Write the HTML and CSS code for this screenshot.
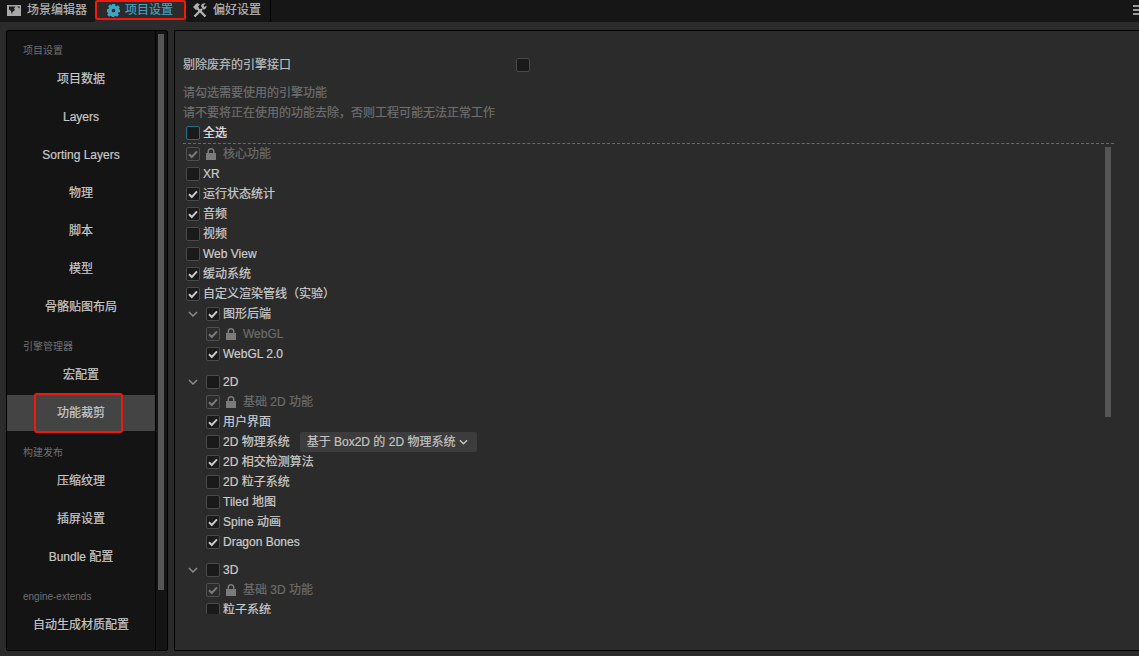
FILE: index.html
```html
<!DOCTYPE html>
<html lang="zh">
<head>
<meta charset="utf-8">
<title>项目设置</title>
<link rel="stylesheet" href="styles.css">
</head>
<body>
<svg class="defs" width="0" height="0" aria-hidden="true">
  <symbol id="lock" viewBox="0 0 10 12"><path fill-rule="evenodd" d="M0 5h1.500V3.500a3.500 3.500 0 0 1 7 0V5H10v7H0zM3 5h4V3.500a2 2 0 0 0-4 0z" fill="currentColor"/></symbol>
  <symbol id="chev" viewBox="0 0 10 6"><path d="M1 1l4 4 4-4" fill="none" stroke="currentColor" stroke-width="1.500"/></symbol>
  <symbol id="tick" viewBox="0 0 12 12"><path d="M2 6.200l2.800 2.800L10 3.400" fill="none" stroke="currentColor" stroke-width="2"/></symbol>
</svg>
<header class="tabbar">
  <div class="tab tab-scene">
    <svg class="tab-icon" viewBox="0 0 14 11"><path d="M0 0h14v11H0z" fill="#a8a8a8"/><path d="M2 1.500h6.500L7 3.500 8 5 5.500 7 5 9.500 4 6 2 4.500z M10 1.500h2.500v2z" fill="#1d1d1d"/></svg>
    <span>场景编辑器</span>
  </div>
  <div class="tab tab-active">
    <svg class="tab-icon gear" viewBox="0 0 14 14"><path fill-rule="evenodd" d="M5.400 0h3.200l.4 1.800 1.200.6 1.600-1 2 2.200-1 1.500.5 1.200L14 5.700v2.800l-1.700.4-.5 1.200 1 1.500-2 2-1.600-1-1.200.5-.4 1.700H5.400L5 13.100l-1.200-.5-1.600 1-2-2 1-1.500-.5-1.200L0 8.500V5.700l1.700-.4.500-1.200-1-1.500 2-2.200 1.600 1L5 1.800zM7 5a2 2 0 1 0 0 4 2 2 0 0 0 0-4z"/></svg>
    <span>项目设置</span>
    <i class="mark"></i>
  </div>
  <div class="tab tab-pref">
    <svg class="tab-icon" viewBox="0 0 14 15"><path d="M12.500 13.500L4 5" fill="none" stroke="#b0b0b0" stroke-width="2.400"/><path d="M1.500 13.500L9 6" fill="none" stroke="#b0b0b0" stroke-width="2.400"/><path d="M0 4l4-4 3 1.500L5 3.500 6 5 3 7z M8 3c.5-2 2.500-3 4.500-2.500L10.500 2.500l1 1.500 2-1.500c.5 2-1 4-3.500 4z" fill="#b0b0b0"/></svg>
    <span>偏好设置</span>
  </div>
  <div class="menu"><b></b><b></b><b></b></div>
</header>

<main class="layout">
  <nav class="sidebar">
    <div class="side-list">
      <h4 class="side-title">项目设置</h4>
      <a class="side-item">项目数据</a>
      <a class="side-item">Layers</a>
      <a class="side-item">Sorting Layers</a>
      <a class="side-item">物理</a>
      <a class="side-item">脚本</a>
      <a class="side-item">模型</a>
      <a class="side-item">骨骼贴图布局</a>
      <h4 class="side-title">引擎管理器</h4>
      <a class="side-item">宏配置</a>
      <a class="side-item side-selected">功能裁剪<i class="mark"></i></a>
      <h4 class="side-title">构建发布</h4>
      <a class="side-item">压缩纹理</a>
      <a class="side-item">插屏设置</a>
      <a class="side-item">Bundle 配置</a>
      <h4 class="side-title">engine-extends</h4>
      <a class="side-item">自动生成材质配置</a>
    </div>
    <div class="side-track"><div class="side-thumb"></div></div>
  </nav>

  <section class="panel">
    <div class="opt-row">
      <span class="opt-label">剔除废弃的引擎接口</span>
      <span class="cb"></span>
    </div>
    <p class="hint">请勾选需要使用的引擎功能</p>
    <p class="hint">请不要将正在使用的功能去除，否则工程可能无法正常工作</p>
    <label class="row all"><span class="cb cb-focus"></span><span class="strong">全选</span></label>
    <div class="feature-wrap">
      <div class="features">
        <div class="row dim"><span class="cb"><svg class="tick"><use href="#tick"/></svg></span><svg class="lock"><use href="#lock"/></svg><span>核心功能</span></div>
        <div class="row"><span class="cb"></span><span>XR</span></div>
        <div class="row"><span class="cb"><svg class="tick"><use href="#tick"/></svg></span><span>运行状态统计</span></div>
        <div class="row"><span class="cb"><svg class="tick"><use href="#tick"/></svg></span><span>音频</span></div>
        <div class="row"><span class="cb"></span><span>视频</span></div>
        <div class="row"><span class="cb"></span><span>Web View</span></div>
        <div class="row"><span class="cb"><svg class="tick"><use href="#tick"/></svg></span><span>缓动系统</span></div>
        <div class="row"><span class="cb"><svg class="tick"><use href="#tick"/></svg></span><span>自定义渲染管线（实验）</span></div>

        <div class="group">
          <div class="row sub"><svg class="chev"><use href="#chev"/></svg><span class="cb"><svg class="tick"><use href="#tick"/></svg></span><span>图形后端</span></div>
          <div class="row sub dim"><span class="cb"><svg class="tick"><use href="#tick"/></svg></span><svg class="lock"><use href="#lock"/></svg><span>WebGL</span></div>
          <div class="row sub"><span class="cb"><svg class="tick"><use href="#tick"/></svg></span><span>WebGL 2.0</span></div>
        </div>

        <div class="group">
          <div class="row sub"><svg class="chev"><use href="#chev"/></svg><span class="cb"></span><span>2D</span></div>
          <div class="row sub dim"><span class="cb"><svg class="tick"><use href="#tick"/></svg></span><svg class="lock"><use href="#lock"/></svg><span>基础 2D 功能</span></div>
          <div class="row sub"><span class="cb"><svg class="tick"><use href="#tick"/></svg></span><span>用户界面</span></div>
          <div class="row sub"><span class="cb"></span><span>2D 物理系统</span><span class="select">基于 Box2D 的 2D 物理系统<svg class="chev chev-sel"><use href="#chev"/></svg></span></div>
          <div class="row sub"><span class="cb"><svg class="tick"><use href="#tick"/></svg></span><span>2D 相交检测算法</span></div>
          <div class="row sub"><span class="cb"></span><span>2D 粒子系统</span></div>
          <div class="row sub"><span class="cb"></span><span>Tiled 地图</span></div>
          <div class="row sub"><span class="cb"><svg class="tick"><use href="#tick"/></svg></span><span>Spine 动画</span></div>
          <div class="row sub"><span class="cb"><svg class="tick"><use href="#tick"/></svg></span><span>Dragon Bones</span></div>
        </div>

        <div class="group">
          <div class="row sub"><svg class="chev"><use href="#chev"/></svg><span class="cb"></span><span>3D</span></div>
          <div class="row sub dim"><span class="cb"><svg class="tick"><use href="#tick"/></svg></span><svg class="lock"><use href="#lock"/></svg><span>基础 3D 功能</span></div>
          <div class="row sub"><span class="cb"></span><span>粒子系统</span></div>
        </div>
      </div>
      <div class="list-thumb"></div>
    </div>
  </section>
</main>
</body>
</html>
```
FILE: styles.css
```css
* { box-sizing: border-box; }
html, body { margin: 0; height: 100%; }
body {
  width: 1139px;
  height: 656px;
  overflow: hidden;
  background: #2b2b2b;
  color: #cccccc;
  font: 12px/20px "Liberation Sans", "Noto Sans CJK SC", sans-serif;
  -webkit-text-stroke: 0.2px;
}
.defs { position: absolute; }

/* tabs */
.tabbar {
  display: flex;
  height: 22px;
  background: #161616;
  color: #b5b5b5;
}
.tab {
  position: relative;
  display: flex;
  align-items: center;
  height: 22px;
  padding-bottom: 2px;
}
.tab-icon { width: 14px; height: 11px; flex: none; }
.tab-scene { width: 95px; padding-left: 7px; gap: 6px; }
.tab-active { width: 91px; padding-left: 12px; gap: 5px; background: #2b2b2b; color: #3fa3c4; }
.tab-active .gear { width: 13px; height: 13px; fill: #3fa3c4; }
.tab-active .mark { inset: 0 0 2px 0; }
.tab-pref { width: 85px; padding-left: 7px; gap: 6px; border-right: 1px solid #000; }
.tab-pref .tab-icon { height: 15px; }
.menu {
  margin-left: auto;
  width: 6px;
  padding-top: 5px;
  display: flex;
  flex-direction: column;
  gap: 2px;
}
.menu b { display: block; height: 2px; background: #9a9a9a; }
.mark {
  position: absolute;
  border: 2px solid #f0190f;
  border-radius: 3px;
  pointer-events: none;
}

/* layout */
.layout {
  display: flex;
  gap: 6px;
  height: 628px;
  padding: 8px 0 0 6px;
}

/* sidebar */
.sidebar {
  display: flex;
  flex: none;
  width: 162px;
  height: 621px;
  background: #141414;
  border: 1px solid #000;
  border-radius: 2px;
}
.side-list {
  display: flex;
  flex-direction: column;
  width: 149px;
  height: 100%;
  border-right: 1px solid #000;
  padding-top: 11px;
}
.side-title {
  margin: 12px 0 0;
  padding-left: 16px;
  height: 18px;
  font-weight: normal;
  font-size: 10px;
  line-height: 18px;
  color: #707070;
  -webkit-text-stroke: 0;
}
.side-title:first-child { margin-top: 0; }
.side-item {
  position: relative;
  display: block;
  flex: none;
  height: 36px;
  margin: 1px 0;
  line-height: 36px;
  text-align: center;
  color: #c8c8c8;
}
.side-selected { background: #444444; }
.side-selected .mark { left: 27px; right: 32px; top: -2px; bottom: -2px; }
.side-track { flex: 1; padding: 3px 3px 0 2px; }
.side-thumb { height: 556px; background: #555555; }

/* panel */
.panel {
  flex: 1;
  height: 621px;
  background: #2b2b2b;
  border: 1px solid #000;
  border-right: 0;
  border-radius: 2px 0 0 2px;
  padding: 24px 0 0 8px;
}
.opt-row {
  display: flex;
  align-items: center;
  justify-content: space-between;
  width: 347px;
  height: 20px;
  margin-bottom: 8px;
}
.hint { margin: 0; color: #6f6f6f; }
.opt-label { color: #bdbdbd; }

.row {
  display: flex;
  align-items: center;
  height: 20px;
  padding-left: 3px;
  gap: 3px;
  white-space: nowrap;
}
.strong { color: #e6e6e6; }
.all { width: 931px; height: 21px; border-bottom: 1px dashed #6a6a6a; padding-bottom: 1px; }
.feature-wrap {
  position: relative;
  width: 931px;
  height: 470px;
  overflow: hidden;
  display: flex;
}
.features { flex: 1; }
.list-thumb {
  position: absolute;
  right: 3px;
  top: 3px;
  width: 6px;
  height: 270px;
  background: #555555;
}
.group { margin-bottom: 8px; }
.sub { padding-left: 23px; position: relative; }
.dim { color: #6c6c6c; }

.cb {
  flex: none;
  display: inline-block;
  width: 14px;
  height: 14px;
  background: #1a1a1a;
  border: 1px solid #4a4a4a;
  border-radius: 2px;
}
.cb-focus { border-color: #1f6f8f; }
.tick { display: block; width: 12px; height: 12px; color: #c8c8c8; }
.dim .cb { background: #2b2b2b; border-color: #4f4f4f; }
.dim .tick { color: #7a7a7a; }
.lock { width: 10px; height: 12px; margin: 0 4px 0 3px; color: #7b7b7b; flex: none; }
.chev {
  position: absolute;
  left: 5px;
  top: 7px;
  width: 10px;
  height: 6px;
  color: #8a8a8a;
}
.select {
  display: inline-flex;
  align-items: center;
  gap: 4px;
  height: 20px;
  margin-left: 7px;
  padding: 0 9px 0 7px;
  background: #3c3c3c;
  border-radius: 2px;
  color: #c2c2c2;
}
.chev-sel { position: static; width: 9px; color: #c8c8c8; }
```
